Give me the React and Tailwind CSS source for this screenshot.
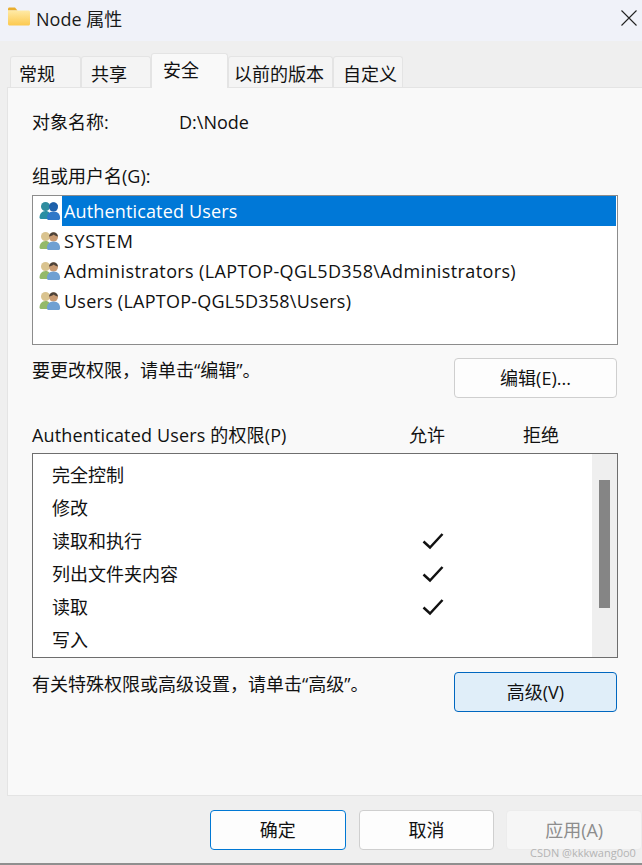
import React from 'react';

const FolderIcon = () => (
    <svg width="22" height="19" viewBox="0 0 22 19" className="shrink-0">
        <defs>
            <linearGradient id="fold" x1="0" y1="0" x2="0" y2="1">
                <stop offset="0" stopColor="#ffeaa6" />
                <stop offset="1" stopColor="#fcc94f" />
            </linearGradient>
        </defs>
        <path d="M0 2C0 1.200 .6 .5 1.400 .5H7l2.500 3H0Z" fill="#e9ae2f" />
        <path d="M0 3.500h20.500c.8 0 1.500.6 1.500 1.400V17c0 .8-.7 1.500-1.500 1.500H1.500C.7 18.500 0 17.800 0 17Z" fill="url(#fold)" />
    </svg>
);

const UsersIcon = ({ selected }) => {
    const backHead = selected ? '#2f8c9f' : '#d9c38f';
    const backBody = selected ? '#2a8ea3' : '#94b96a';
    const frontHead = selected ? '#1c5fa8' : '#4d4238';
    const face = selected ? '#1f62ad' : '#c89a72';
    const frontBody = selected ? '#2f78c8' : '#6fa0d2';
    return (
        <svg width="22" height="20" viewBox="0 0 22 20" className="shrink-0">
            <circle cx="6.500" cy="5.500" r="4.500" fill={backHead} />
            <path d="M0.500 17c0-4 2.200-7 6-7s5 2.500 5 7l-1 1H1.500Z" fill={backBody} />
            <circle cx="14.500" cy="6" r="4.500" fill={face} />
            <path d="M10 5.500C10.200 2.800 12.200 1.200 14.500 1.200s4.300 1.600 4.500 4.300c-1.600-.3-3.200-1-4.300-2-1 1-2.900 1.800-4.700 2Z" fill={frontHead} />
            <path d="M8 18c-.6-4.500 2-7.500 6.500-7.500s7.100 3 6.500 7.500l-1 1H9Z" fill={frontBody} />
        </svg>
    );
};

const CheckIcon = () => (
    <svg width="22" height="18" viewBox="0 0 22 18">
        <path d="M1.500 9.500l6.500 6L20.500 2" fill="none" stroke="#111" strokeWidth="2.500" />
    </svg>
);

function Tab({ label, active, className }) {
    if (active) {
        return (
            <div className={`relative z-10 -mb-px h-[35px] bg-[#f9f9f9] border border-b-0 border-[#e4e4e4] rounded-t-[3px] flex items-center ${className}`}>
                <span className="pb-[2px]">{label}</span>
            </div>
        );
    }
    return (
        <div className={`h-[31px] bg-[#f4f4f4] border border-b-0 border-[#e4e4e4] rounded-t-[3px] flex items-center ${className}`}>
            <span className="pt-[3px]">{label}</span>
        </div>
    );
}

function Button({ label, className }) {
    return (
        <button type="button" className={`h-10 rounded-[4px] border flex items-center justify-center ${className}`}>
            {label}
        </button>
    );
}

const groups = [
    { name: 'Authenticated Users', selected: true, spacing: 'tracking-[0.15px]' },
    { name: 'SYSTEM', spacing: 'tracking-[0.6px]' },
    { name: 'Administrators (LAPTOP-QGL5D358\\Administrators)', spacing: 'tracking-[0.38px]' },
    { name: 'Users (LAPTOP-QGL5D358\\Users)', spacing: 'tracking-[0.24px]' },
];

const perms = [
    { name: '完全控制' },
    { name: '修改' },
    { name: '读取和执行', allow: true },
    { name: '列出文件夹内容', allow: true },
    { name: '读取', allow: true },
    { name: '写入' },
];

export default function App() {
    return (
        <div
            className="relative w-[642px] h-[865px] overflow-hidden bg-[#efefef] text-[18px] leading-[24px] text-[#111] flex flex-col"
            style={{ fontFamily: '"Open Sans", "Noto Sans CJK SC", sans-serif' }}
        >
            {/* title bar */}
            <div className="h-[41px] bg-[#f0f2f9] flex items-start pt-[7px] pl-2 pr-[5px] shrink-0">
                <FolderIcon />
                <span className="ml-[6px] text-[#1a1a1a]">Node 属性</span>
                <svg width="16" height="16" viewBox="0 0 16 16" className="ml-auto mt-[3px]">
                    <path d="M0.500 0.500L15.500 15.500M15.500 0.500L0.500 15.500" stroke="#222" strokeWidth="1.100" />
                </svg>
            </div>

            {/* tabs */}
            <div className="flex items-end h-[46px] pl-[10px] shrink-0">
                <Tab label="常规" className="w-[71px] pl-[8px]" />
                <Tab label="共享" className="w-[70px] pl-[9px]" />
                <Tab label="安全" active className="w-[77px] pl-[11px]" />
                <Tab label="以前的版本" className="w-[105px] pl-[5px]" />
                <Tab label="自定义" className="w-[70px] pl-[9px]" />
            </div>

            {/* panel */}
            <div className="ml-[7px] h-[709px] bg-[#f9f9f9] border border-r-0 border-[#e4e4e4] pl-6 pr-6 shrink-0 flex flex-col">
                <div className="flex mt-[22px] h-6 items-center">
                    <span className="w-[147px]">对象名称:</span>
                    <span>D:\Node</span>
                </div>

                <div className="mt-[30px] h-6">组或用户名(G):</div>
                <div className="mt-[7px] w-[586px] h-[150px] bg-white border border-[#8c8c8c] pl-[6px] pr-px">
                    {groups.map((g) => (
                        <div key={g.name} className="h-[30px] flex items-center">
                            <UsersIcon selected={g.selected} />
                            <span className={`ml-[1px] flex-1 h-full flex items-center pl-[2px] whitespace-nowrap ${g.spacing} ${g.selected ? 'bg-[#0078d7] text-white' : ''}`}>
                                {g.name}
                            </span>
                        </div>
                    ))}
                </div>

                <div className="mt-[13px] w-[585px] flex items-start justify-between">
                    <span>{'要更改权限\uFF0C请单击“编辑”。'}</span>
                    <Button label="编辑(E)..." className="w-[163px] bg-[#fdfdfd] border-[#cfcfcf]" />
                </div>

                <div className="mt-[25px] h-6 flex items-center">
                    <span className="w-[377px] tracking-[0.15px]">Authenticated Users 的权限(P)</span>
                    <span className="w-[114px]">允许</span>
                    <span>拒绝</span>
                </div>
                <div className="mt-[6px] w-[586px] h-[205px] bg-white border border-[#6e6e6e] flex overflow-hidden">
                    <div className="flex-1 pl-[19px] pt-[4px]">
                        {perms.map((p) => (
                            <div key={p.name} className="h-[33px] flex items-center">
                                <span className="w-[370px]">{p.name}</span>
                                {p.allow && <CheckIcon />}
                            </div>
                        ))}
                    </div>
                    <div className="w-[25px] bg-[#efefef] pt-[26px] pl-[7px]">
                        <div className="w-[11px] h-[128px] bg-[#858585]" />
                    </div>
                </div>

                <div className="mt-[14px] w-[585px] flex items-start justify-between">
                    <span>{'有关特殊权限或高级设置\uFF0C请单击“高级”。'}</span>
                    <Button label="高级(V)" className="w-[163px] bg-[#e0eef9] border-[#0067c0]" />
                </div>
            </div>

            {/* footer buttons */}
            <div className="flex pl-[210px] mt-[14px] gap-[13px]">
                <Button label="确定" className="w-[136px] bg-[#fdfdfd] border-[#0078d4]" />
                <Button label="取消" className="w-[136px] bg-[#fdfdfd] border-[#cfcfcf]" />
                <Button label="应用(A)" className="ml-[-1px] w-[136px] bg-[#f6f6f6] border-[#ececec] text-[#8d8d8d]" />
            </div>

            {/* window edge */}
            <div className="absolute left-0 right-0 bottom-0 h-[2px] bg-[#8f8f8f]" />
            {/* watermark */}
            <span className="absolute left-[530px] top-[846px] text-[11px] leading-[14px] text-[#b4b4b4] whitespace-nowrap">CSDN @kkkwang0o0</span>
        </div>
    );
}
